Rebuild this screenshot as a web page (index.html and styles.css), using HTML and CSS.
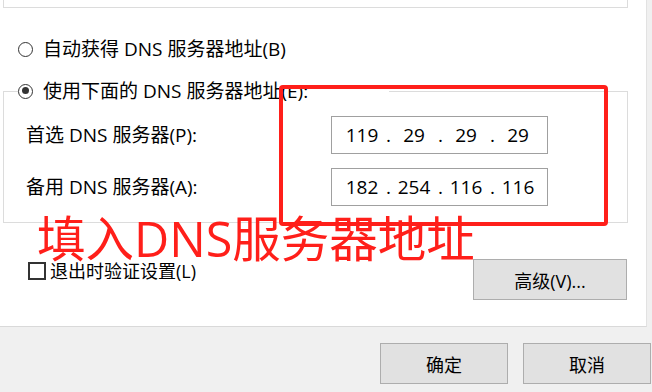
FILE: index.html
```html
<!DOCTYPE html>
<html lang="zh-CN">
<head>
<meta charset="utf-8">
<title>DNS</title>
<link rel="stylesheet" href="styles.css">
</head>
<body>
<div class="dialog">
  <div class="panel">
    <div class="topbox"></div>
    <div class="radio-row">
      <span class="radio"></span>
      <span class="txt">自动获得 DNS 服务器地址(B)</span>
    </div>
    <fieldset class="group">
      <legend class="legend">
        <span class="radio checked"></span>
        <span class="txt">使用下面的 DNS 服务器地址(E):</span>
      </legend>
      <div class="grid">
        <div class="lbl">首选 DNS 服务器(P):</div>
        <div class="ip">
          <span class="seg">119</span><span class="dot">.</span><span class="seg">29</span><span class="dot">.</span><span class="seg">29</span><span class="dot">.</span><span class="seg">29</span>
        </div>
        <div class="lbl">备用 DNS 服务器(A):</div>
        <div class="ip">
          <span class="seg">182</span><span class="dot">.</span><span class="seg">254</span><span class="dot">.</span><span class="seg">116</span><span class="dot">.</span><span class="seg">116</span>
        </div>
      </div>
    </fieldset>
    <div class="bottom-row">
      <div class="check-row">
        <span class="checkbox"></span>
        <span class="ctxt">退出时验证设置(L)</span>
      </div>
      <div class="btn adv">高级(V)...</div>
    </div>
  </div>
  <div class="footer">
    <div class="btn act">确定</div>
    <div class="btn act">取消</div>
  </div>
  <div class="annot-box"></div>
  <div class="annot-text">填入DNS服务器地址</div>
</div>
</body>
</html>
```
FILE: styles.css
```css
html, body {
  margin: 0;
  padding: 0;
}
body {
  width: 652px;
  height: 392px;
  overflow: hidden;
  background: #f0f0f0;
  font-family: "Open Sans", "Noto Sans CJK SC", sans-serif;
  color: #000;
}
.dialog {
  position: relative;
  width: 652px;
  height: 392px;
}
.panel {
  width: 646px;
  height: 326px;
  background: #fff;
  border-right: 1px solid #e2e2e2;
  border-bottom: 1px solid #d9d9d9;
  overflow: hidden;
}
.topbox {
  margin-left: 3px;
  width: 623px;
  height: 7px;
  border: 1px solid #dcdcdc;
  border-top: none;
}
.radio-row {
  display: flex;
  align-items: center;
  margin-top: 28px;
  padding-left: 18px;
  height: 26px;
}
.radio {
  box-sizing: border-box;
  width: 15px;
  height: 15px;
  border: 1.5px solid #333;
  border-radius: 50%;
  margin-right: 10px;
  flex: none;
  position: relative;
}
.radio.checked::after {
  content: "";
  position: absolute;
  left: 2.5px;
  top: 2.5px;
  width: 7px;
  height: 7px;
  border-radius: 50%;
  background: #333;
}
.txt {
  font-size: 19px;
  line-height: 26px;
  white-space: nowrap;
}
.group {
  margin: 16px 0 0 3px;
  padding: 0 0 16px 0;
  width: 623px;
  border: 1px solid #dcdcdc;
  min-width: 0;
}
.legend {
  display: flex;
  align-items: center;
  width: 371px;
  height: 26px;
  padding: 0;
  margin-left: 14px;
}
.grid {
  display: grid;
  grid-template-columns: 305px 217px;
  row-gap: 14px;
  padding: 12px 0 0 22px;
  align-items: center;
}
.lbl {
  font-size: 19px;
  line-height: 26px;
  white-space: nowrap;
}
.ip {
  box-sizing: border-box;
  width: 217px;
  height: 38px;
  border: 1px solid #a0a0a0;
  display: flex;
  align-items: center;
  padding-left: 6px;
  font-size: 19px;
}
.seg {
  width: 48px;
  text-align: center;
}
.dot {
  width: 4px;
  text-align: center;
}
.bottom-row {
  display: flex;
  justify-content: space-between;
  align-items: flex-start;
  margin-top: 36px;
  padding-left: 28px;
  width: 599px;
}
.check-row {
  display: flex;
  align-items: center;
  height: 24px;
}
.checkbox {
  box-sizing: border-box;
  width: 18px;
  height: 18px;
  border: 2px solid #333;
  margin-right: 4px;
  flex: none;
}
.ctxt {
  font-size: 18px;
  line-height: 18px;
  white-space: nowrap;
}
.btn {
  box-sizing: border-box;
  background: #e1e1e1;
  border: 1px solid #adadad;
  display: flex;
  align-items: center;
  justify-content: center;
  font-size: 18px;
}
.adv {
  width: 154px;
  height: 41px;
}
.footer {
  display: flex;
  justify-content: flex-end;
  gap: 15px;
  padding: 16px 1px 0 0;
}
.act {
  width: 128px;
  height: 41px;
}
.annot-box {
  position: absolute;
  left: 279px;
  top: 85px;
  width: 329px;
  height: 141px;
  box-sizing: border-box;
  border: 4px solid #ff1f1a;
  border-radius: 4px;
}
.annot-text {
  position: absolute;
  left: 37px;
  top: 216px;
  font-size: 48.5px;
  line-height: 44px;
  color: #ff1f1a;
  white-space: nowrap;
}
```
